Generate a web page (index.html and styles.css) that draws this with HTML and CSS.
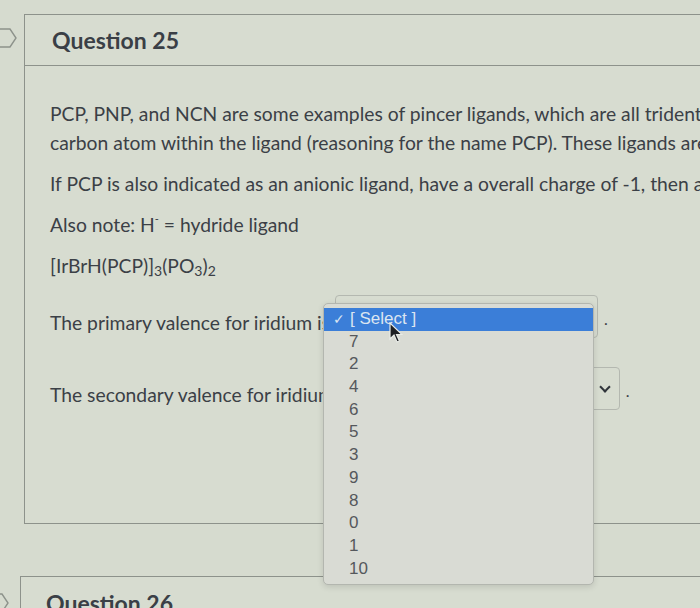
FILE: index.html
```html
<!DOCTYPE html>
<html lang="en">
<head>
  <meta charset="UTF-8" />
  <title>Question 25</title>
  <link rel="stylesheet" href="styles.css">
</head>
<body>
  <div class="page">

    <svg class="flag flag-top" width="18" height="22" viewBox="0 0 18 22">
      <path d="M-4 2 H10 L16 11 L10 20 H-4" fill="none" stroke="#8d928b" stroke-width="1.4"/>
    </svg>

    <section class="question">
      <header class="q-header">
        <h2>Question 25</h2>
      </header>

      <div class="q-body">
        <p>PCP, PNP, and NCN are some examples of pincer ligands, which are all tridentate<br>carbon atom within the ligand (reasoning for the name PCP). These ligands are</p>
        <p>If PCP is also indicated as an anionic ligand, have a overall charge of -1, then answer</p>
        <p>Also note: H<sup>-</sup> = hydride ligand</p>
        <p>[IrBrH(PCP)]<sub>3</sub>(PO<sub>3</sub>)<sub>2</sub></p>

        <div class="answer answer-first">
          <span class="label">The primary valence for iridium is</span>
          <div class="select">
            <span class="chevron"></span>
            <ul class="dropdown">
              <li class="active"><span class="check">✓</span>[ Select ]</li>
              <li>7</li>
              <li>2</li>
              <li>4</li>
              <li>6</li>
              <li>5</li>
              <li>3</li>
              <li>9</li>
              <li>8</li>
              <li>0</li>
              <li>1</li>
              <li>10</li>
            </ul>
            <svg class="cursor" width="14" height="22" viewBox="0 0 14 22">
              <path d="M1 1 L1 17 L5 13 L8 20 L10.5 19 L7.5 12.5 L13 12.5 Z" fill="#1d1f22" stroke="#e8ebe6" stroke-width="1.2"/>
            </svg>
          </div>
          <span class="dot">.</span>
        </div>

        <div class="answer">
          <span class="label">The secondary valence for iridium is</span>
          <div class="select">
            <span class="chevron"></span>
          </div>
          <span class="dot">.</span>
        </div>
      </div>
    </section>

    <svg class="flag flag-bottom" width="10" height="20" viewBox="0 0 10 20">
      <path d="M-4 2 H2 L8 11 L2 20" fill="none" stroke="#8d928b" stroke-width="1.4"/>
    </svg>

    <section class="question question-next">
      <header class="q-header">
        <h2>Question 26</h2>
      </header>
    </section>

  </div>
</body>
</html>
```

FILE: styles.css
```css
body {
  margin: 0;
  padding: 0;
  font-family: Lato, 'Open Sans', sans-serif;
  background: #d6dbcf;
  color: #3b4046;
  overflow: hidden;
}

.page {
  position: relative;
  width: 700px;
  height: 608px;
  overflow: hidden;
  padding: 14px 0 0 24px;
  box-sizing: border-box;
}

.flag {
  position: absolute;
  left: 0;
}

.flag-top {
  top: 27px;
}

.flag-bottom {
  top: 592px;
}

.question {
  width: 760px;
  border: 1px solid #8d928b;
  border-right: none;
  background: #d7dcd0;
}

.q-header {
  height: 50px;
  border-bottom: 1px solid #8d928b;
  display: flex;
  align-items: center;
  padding-left: 27px;
}

.q-header h2 {
  margin: 0;
  font-size: 23px;
  font-weight: 700;
  color: #3a3f46;
}

.q-body {
  padding: 33px 0 113px 25px;
}

.q-body p {
  margin: 0 0 12px;
  font-size: 19.3px;
  line-height: 29px;
  white-space: nowrap;
}

.q-body sup {
  font-size: 11px;
  line-height: 0;
  vertical-align: 9px;
}

.q-body sub {
  font-size: 14px;
  line-height: 0;
  vertical-align: -3px;
}

.answer {
  display: flex;
  align-items: flex-start;
  gap: 5px;
  font-size: 19.3px;
}

.answer-first {
  margin-top: 15px;
}

.answer + .answer {
  margin-top: 29px;
}

.label {
  padding-top: 13px;
  line-height: 29px;
}

.select {
  position: relative;
  width: 263px;
  height: 43px;
  border: 1px solid #b4b8b0;
  border-radius: 4px;
  box-sizing: border-box;
}

.chevron {
  position: absolute;
  right: 10px;
  top: 15px;
  width: 6px;
  height: 6px;
  border-right: 2px solid #30343a;
  border-bottom: 2px solid #30343a;
  transform: rotate(45deg);
}

.dot {
  padding-top: 14px;
  margin-left: 1px;
  font-size: 16px;
}

.dropdown {
  position: absolute;
  left: -13px;
  top: 7px;
  width: 269px;
  margin: 0;
  padding: 4px 0 4px;
  list-style: none;
  background: #d9dbd4;
  border: 1px solid #b3b6af;
  border-radius: 5px;
  box-shadow: 0 2px 6px rgba(0, 0, 0, 0.12);
  font-family: 'Liberation Sans', Arial, sans-serif;
  font-size: 17px;
  color: #55585c;
  z-index: 2;
}

.dropdown li {
  height: 22.7px;
  line-height: 22.7px;
  padding-left: 25px;
}

.dropdown li.active {
  background: #3b7ed8;
  color: #dbe5f1;
  padding-left: 9px;
}

.check {
  display: inline-block;
  width: 17px;
  font-size: 14px;
}

.cursor {
  position: absolute;
  left: 53px;
  top: 26px;
  z-index: 3;
}

.question-next {
  margin-top: 52px;
  margin-left: -4px;
  height: 80px;
}

.question-next .q-header {
  border-bottom: none;
  padding-left: 25px;
  align-items: flex-start;
  padding-top: 12px;
  height: auto;
}
```
